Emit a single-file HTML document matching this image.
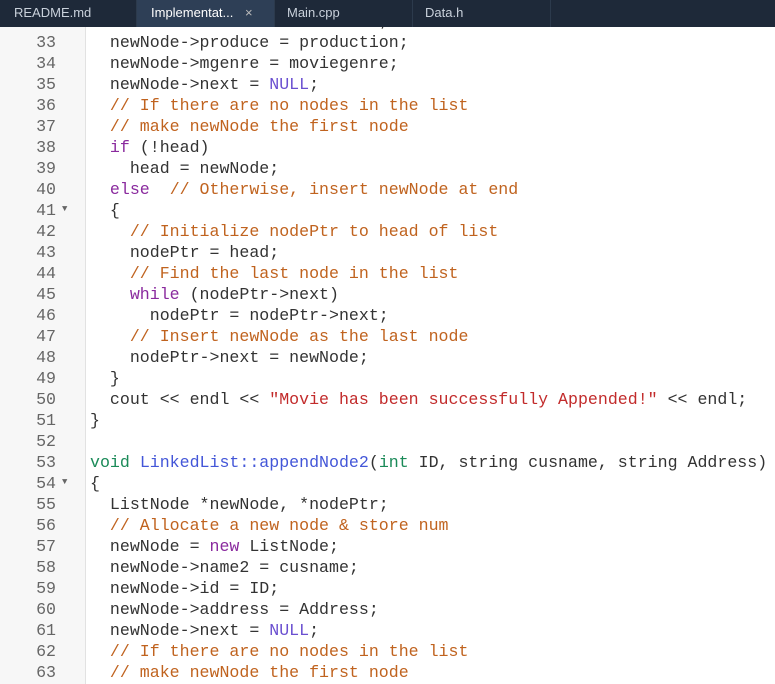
<!DOCTYPE html>
<html><head><meta charset="utf-8"><style>
body{margin:0;width:775px;height:684px;overflow:hidden;background:#fff;position:relative;font-family:"Liberation Sans",sans-serif}
.tabs{position:absolute;left:0;top:0;width:775px;height:27px;background:#1e2939;z-index:2}
.tab{position:absolute;top:0;height:27px;line-height:25px;font-size:13px;color:#c9d1db;border-right:1px solid #2c3a4c;box-sizing:border-box}
.tab.act{background:#2e3f56;color:#fff}
.gut{position:absolute;left:0;top:0;width:86px;height:684px;background:#f7f7f7;border-right:1px solid #e2e2e2;box-sizing:border-box}
.code{position:absolute;left:0;top:11px;font-family:"Liberation Mono",monospace;font-size:16.6px;line-height:21px;color:#333}
.l{height:21px;white-space:pre;position:relative}
.n{position:absolute;left:0;width:56px;text-align:right;color:#666}
.f{position:absolute;left:62px;top:-1px;font-size:9px;color:#666}
.t{position:absolute;left:90px}
.c{color:#c0631f}.k{color:#8a2a9e}.s{color:#c22b2b}.g{color:#1a8a58}.b{color:#4356d8}.u{color:#6a4fd0}
</style></head><body>
<div class="gut"></div>
<div class="tabs">
<div class="tab" style="left:0;width:137px;padding-left:14px">README.md</div>
<div class="tab act" style="left:137px;width:138px;padding-left:14px">Implementat... <span style="margin-left:8px;color:#bbb">×</span></div>
<div class="tab" style="left:275px;width:138px;padding-left:12px">Main.cpp</div>
<div class="tab" style="left:413px;width:138px;padding-left:12px">Data.h</div>
</div>
<div class="code">
<div class="l"><span class="n">32</span><span class="t">  newNode->title = movietitle;</span></div>
<div class="l"><span class="n">33</span><span class="t">  newNode->produce = production;</span></div>
<div class="l"><span class="n">34</span><span class="t">  newNode->mgenre = moviegenre;</span></div>
<div class="l"><span class="n">35</span><span class="t">  newNode->next = <span class="u">NULL</span>;</span></div>
<div class="l"><span class="n">36</span><span class="t">  <span class="c">// If there are no nodes in the list</span></span></div>
<div class="l"><span class="n">37</span><span class="t">  <span class="c">// make newNode the first node</span></span></div>
<div class="l"><span class="n">38</span><span class="t">  <span class="k">if</span> (!head)</span></div>
<div class="l"><span class="n">39</span><span class="t">    head = newNode;</span></div>
<div class="l"><span class="n">40</span><span class="t">  <span class="k">else</span>  <span class="c">// Otherwise, insert newNode at end</span></span></div>
<div class="l"><span class="n">41</span><span class="f">▼</span><span class="t">  {</span></div>
<div class="l"><span class="n">42</span><span class="t">    <span class="c">// Initialize nodePtr to head of list</span></span></div>
<div class="l"><span class="n">43</span><span class="t">    nodePtr = head;</span></div>
<div class="l"><span class="n">44</span><span class="t">    <span class="c">// Find the last node in the list</span></span></div>
<div class="l"><span class="n">45</span><span class="t">    <span class="k">while</span> (nodePtr->next)</span></div>
<div class="l"><span class="n">46</span><span class="t">      nodePtr = nodePtr->next;</span></div>
<div class="l"><span class="n">47</span><span class="t">    <span class="c">// Insert newNode as the last node</span></span></div>
<div class="l"><span class="n">48</span><span class="t">    nodePtr->next = newNode;</span></div>
<div class="l"><span class="n">49</span><span class="t">  }</span></div>
<div class="l"><span class="n">50</span><span class="t">  cout &lt;&lt; endl &lt;&lt; <span class="s">"Movie has been successfully Appended!"</span> &lt;&lt; endl;</span></div>
<div class="l"><span class="n">51</span><span class="t">}</span></div>
<div class="l"><span class="n">52</span><span class="t"></span></div>
<div class="l"><span class="n">53</span><span class="t"><span class="g">void</span> <span class="b">LinkedList::appendNode2</span>(<span class="g">int</span> ID, string cusname, string Address)</span></div>
<div class="l"><span class="n">54</span><span class="f">▼</span><span class="t">{</span></div>
<div class="l"><span class="n">55</span><span class="t">  ListNode *newNode, *nodePtr;</span></div>
<div class="l"><span class="n">56</span><span class="t">  <span class="c">// Allocate a new node &amp; store num</span></span></div>
<div class="l"><span class="n">57</span><span class="t">  newNode = <span class="k">new</span> ListNode;</span></div>
<div class="l"><span class="n">58</span><span class="t">  newNode->name2 = cusname;</span></div>
<div class="l"><span class="n">59</span><span class="t">  newNode->id = ID;</span></div>
<div class="l"><span class="n">60</span><span class="t">  newNode->address = Address;</span></div>
<div class="l"><span class="n">61</span><span class="t">  newNode->next = <span class="u">NULL</span>;</span></div>
<div class="l"><span class="n">62</span><span class="t">  <span class="c">// If there are no nodes in the list</span></span></div>
<div class="l"><span class="n">63</span><span class="t">  <span class="c">// make newNode the first node</span></span></div>
</div>
</body></html>
